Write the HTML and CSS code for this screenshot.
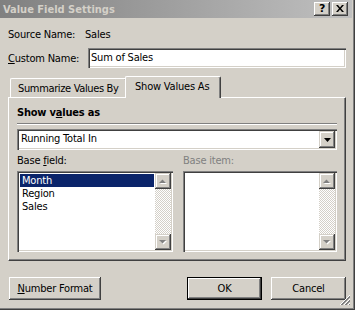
FILE: index.html
```html
<!DOCTYPE html>
<html>
<head>
<meta charset="utf-8">
<link rel="stylesheet" href="styles.css">
</head>
<body>
<div class="win">
  <div class="titlebar">
    <span class="title">Value Field Settings</span>
    <div class="capbtns">
      <span class="capbtn q">?</span>
      <span class="capbtn"><svg width="8" height="7" viewBox="0 0 8 7"><path d="M0 0h2l2 2.5L6 0h2L5 3.5 8 7H6L4 4.5 2 7H0l3-3.5z" fill="#000"/></svg></span>
    </div>
  </div>
  <div class="content">
    <div class="row src"><span class="lbl">Source Name:</span><span>Sales</span></div>
    <div class="row cust"><span class="lbl lbl2"><u>C</u>ustom Name:</span><div class="input">Sum of Sales</div></div>
    <div class="tabs">
      <div class="tab">Summarize Values By</div>
      <div class="tab active">Show Values As</div>
    </div>
    <div class="panel">
      <div class="heading">Show v<u>a</u>lues as</div>
      <div class="sep"></div>
      <div class="combo"><span class="combotext">Running Total In</span><span class="sbtn"><svg width="7" height="4" viewBox="0 0 7 4"><path d="M0 0h7L3.5 4z" fill="#000"/></svg></span></div>
      <div class="cols">
        <div class="col">
          <div class="clbl">Base <u>f</u>ield:</div>
          <div class="list">
            <div class="items">
              <div class="item sel">Month</div>
              <div class="item">Region</div>
              <div class="item">Sales</div>
            </div>
            <div class="vscroll">
              <span class="sbtn dis"><svg width="8" height="5" viewBox="0 0 8 5"><path d="M1 5h7L4.5 1.5z" fill="#fff"/><path d="M0 4h7L3.5 0.5z" fill="#808080"/></svg></span>
              <span class="track"></span>
              <span class="sbtn dis"><svg width="8" height="5" viewBox="0 0 8 5"><path d="M1 1h7L4.5 4.5z" fill="#fff"/><path d="M0 0h7L3.5 3.5z" fill="#808080"/></svg></span>
            </div>
          </div>
        </div>
        <div class="col col2">
          <div class="clbl dis">Base item:</div>
          <div class="list">
            <div class="items"></div>
            <div class="vscroll">
              <span class="sbtn dis"><svg width="8" height="5" viewBox="0 0 8 5"><path d="M1 5h7L4.5 1.5z" fill="#fff"/><path d="M0 4h7L3.5 0.5z" fill="#808080"/></svg></span>
              <span class="track"></span>
              <span class="sbtn dis"><svg width="8" height="5" viewBox="0 0 8 5"><path d="M1 1h7L4.5 4.5z" fill="#fff"/><path d="M0 0h7L3.5 3.5z" fill="#808080"/></svg></span>
            </div>
          </div>
        </div>
      </div>
    </div>
    <div class="buttons">
      <div class="btn numfmt"><u>N</u>umber Format</div>
      <div class="right">
        <div class="btn def">OK</div>
        <div class="btn">Cancel</div>
      </div>
    </div>
  </div>
  <svg class="grip" width="12" height="12" viewBox="0 0 12 12">
    <path d="M11 1L1 11M11 5L5 11M11 9L9 11" stroke="#fff" stroke-width="1"/>
    <path d="M11 2L2 11M11 3L3 11M11 6L6 11M11 7L7 11M11 10L10 11" stroke="#808080" stroke-width="1"/>
  </svg>
</div>
</body>
</html>
```
FILE: styles.css
```css
* { box-sizing: border-box; }
body {
  margin: 0;
  width: 358px;
  height: 313px;
  overflow: hidden;
  background: #fff;
  font-family: "DejaVu Sans Condensed", "DejaVu Sans", sans-serif;
  font-size: 11px;
  letter-spacing: -0.2px;
  color: #000;
}
.win {
  position: relative;
  width: 355px;
  height: 310px;
  background: #d4d0c8;
  border-right: 1px solid #404040;
  border-bottom: 1px solid #404040;
  box-shadow: inset -1px -1px #808080;
  padding: 0 2px 2px 0;
  display: flex;
  flex-direction: column;
}
.titlebar {
  height: 18px;
  background: linear-gradient(to right, #808080, #c0c0c0);
  display: flex;
  align-items: center;
  justify-content: space-between;
  padding: 0 4px 0 3px;
}
.title {
  color: #d4d0c8;
  font-weight: bold;
  font-size: 11px;
  letter-spacing: 0;
}
.capbtns { display: flex; gap: 2px; }
.capbtn {
  width: 16px;
  height: 14px;
  background: #d4d0c8;
  box-shadow: inset -1px -1px #404040, inset 1px 1px #fff, inset -2px -2px #808080;
  display: flex;
  align-items: center;
  justify-content: center;
  font-weight: bold;
  font-size: 11px;
  font-family: "DejaVu Sans", sans-serif;
  padding-bottom: 1px;
}
.content {
  flex: 1;
  display: flex;
  flex-direction: column;
  padding: 0 0 0 8px;
}
.row { display: flex; align-items: center; }
.src { margin-top: 9px; height: 14px; }
.lbl { width: 77px; }
.lbl2 { width: 80px; }
.cust { margin-top: 7px; }
.input {
  width: 258px;
  height: 20px;
  background: #fff;
  box-shadow: inset 1px 1px #808080, inset 2px 2px #404040, inset -1px -1px #fff, inset -2px -2px #d4d0c8;
  padding: 3px 3px 0 3px;
  line-height: 14px;
}
.tabs {
  display: flex;
  align-items: flex-end;
  margin-top: 8px;
  height: 21px;
  padding-left: 2px;
  position: relative;
  z-index: 1;
}
.tab {
  height: 19px;
  width: 117px;
  white-space: nowrap;
  padding: 3px 0 0 7px;
  letter-spacing: -0.35px;
  border-top: 1px solid #fff;
  border-left: 1px solid #fff;
  border-right: 1px solid #404040;
  box-shadow: inset -1px 0 #808080;
  border-radius: 2px 2px 0 0;
  line-height: 14px;
}
.tab.active {
  height: 22px;
  margin-bottom: -1px;
  margin-left: -2px;
  width: 96px;
  padding: 3px 0 0 9px;
  letter-spacing: -0.2px;
  background: #d4d0c8;
}
.panel {
  width: 338px;
  height: 164px;
  border-top: 1px solid #fff;
  border-left: 1px solid #fff;
  border-right: 1px solid #404040;
  border-bottom: 1px solid #404040;
  box-shadow: inset -1px -1px #808080;
  padding: 8px 8px 0 8px;
  display: flex;
  flex-direction: column;
}
.heading { font-weight: bold; height: 14px; line-height: 14px; font-size: 11px; }
.sep {
  margin-top: 3px;
  height: 2px;
  border-top: 1px solid #808080;
  border-bottom: 1px solid #fff;
  width: 320px;
}
.combo {
  margin-top: 4px;
  width: 320px;
  height: 21px;
  background: #fff;
  box-shadow: inset 1px 1px #808080, inset 2px 2px #404040, inset -1px -1px #fff, inset -2px -2px #d4d0c8;
  display: flex;
  align-items: stretch;
  padding: 2px;
}
.combotext { flex: 1; padding: 1px 0 0 2px; line-height: 14px; }
.sbtn {
  width: 16px;
  height: 17px;
  background: #d4d0c8;
  box-shadow: inset -1px -1px #404040, inset 1px 1px #d4d0c8, inset -2px -2px #808080, inset 2px 2px #fff;
  display: flex;
  align-items: center;
  justify-content: center;
}
.cols { display: flex; gap: 10px; margin-top: 4px; }
.col { display: flex; flex-direction: column; width: 156px; }
.col2 { width: 154px; }
.clbl { height: 14px; line-height: 14px; margin-bottom: 3px; }
.clbl.dis { color: #808080; }
.list {
  height: 81px;
  background: #fff;
  box-shadow: inset 1px 1px #808080, inset 2px 2px #404040, inset -1px -1px #fff, inset -2px -2px #d4d0c8;
  padding: 2px;
  display: flex;
}
.items { flex: 1; padding: 1px 1px 0 1px; }
.item { height: 13px; line-height: 13px; padding-left: 2px; }
.item.sel { background: #0a246a; color: #fff; }
.vscroll { width: 16px; display: flex; flex-direction: column; }
.vscroll .sbtn { height: 16px; }
.track {
  flex: 1;
  background-color: #d4d0c8;
  background-image: repeating-conic-gradient(#fff 0 25%, #d4d0c8 0 50%);
  background-size: 2px 2px;
}
.buttons {
  display: flex;
  justify-content: space-between;
  margin-top: 16px;
  width: 338px;
  padding-left: 1px;
}
.right { display: flex; gap: 9px; }
.btn {
  height: 23px;
  width: 75px;
  background: #d4d0c8;
  box-shadow: inset -1px -1px #404040, inset 1px 1px #fff, inset -2px -2px #808080;
  display: flex;
  align-items: center;
  justify-content: center;
}
.numfmt { width: 92px; }
.btn.def {
  border: 1px solid #000;
}
.grip {
  position: absolute;
  right: 3px;
  bottom: 3px;
}
```
